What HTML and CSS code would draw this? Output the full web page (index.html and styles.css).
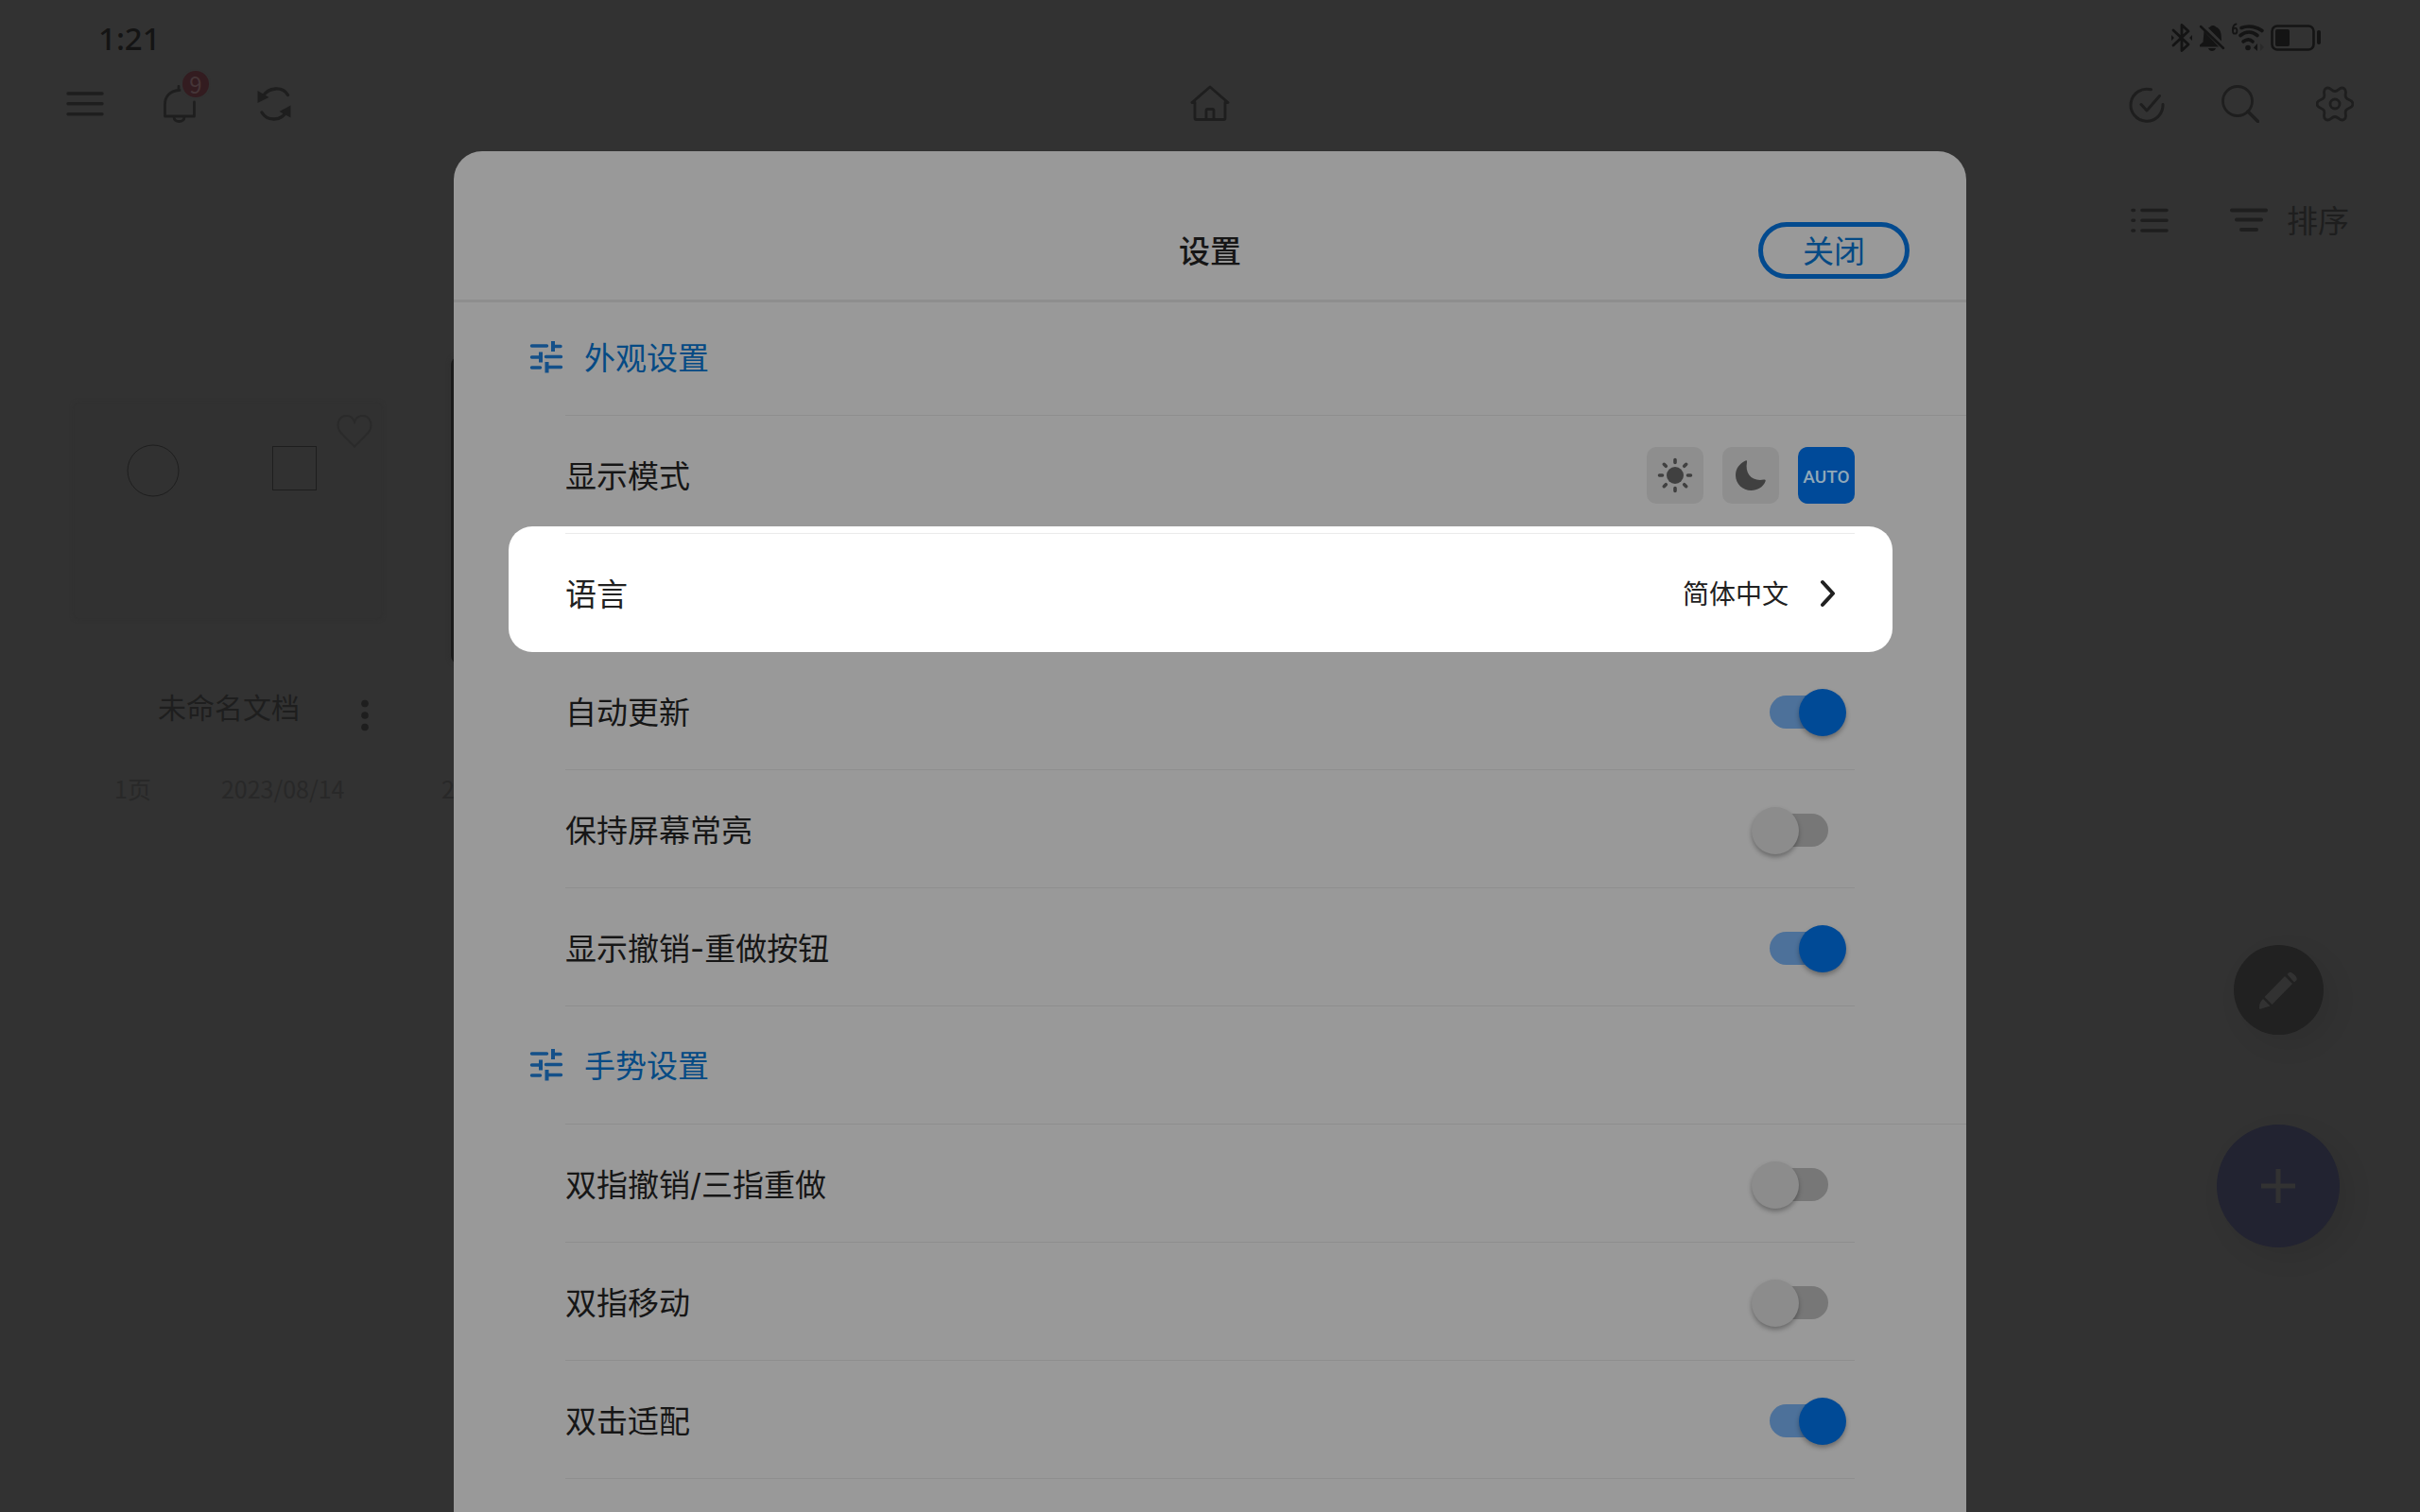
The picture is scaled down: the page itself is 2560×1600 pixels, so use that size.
FILE: index.html
```html
<!DOCTYPE html>
<html lang="zh-CN">
<head>
<meta charset="utf-8">
<title>设置</title>
<meta name="viewport" content="width=device-width, initial-scale=1">
<link rel="stylesheet" href="styles.css">
</head>
<body>
<div class="library">
  <div class="status">
    <span class="clock">1:21</span>
    <div class="status-icons">
      <svg width="24" height="32" viewBox="0 0 24 32" fill="none" stroke="currentColor" stroke-width="2.8" stroke-linejoin="round" stroke-linecap="round"><path d="M3 8l16 15-7 6.500V2.500L19 9 3 24"/><path d="M1 13v6l3-3zM23 13v6l-3-3z" fill="currentColor" stroke="none"/></svg>
      <svg width="28" height="32" viewBox="0 0 28 32" fill="currentColor"><path d="M10 5.500l2-1c1-2 5-2 6 0 5 2 6 6 6 15zM5.500 9L21 25.500H1v-2l3.500-3zM10 27h8c-1 4-7 4-8 0z"/><path d="M2 4l24 23" stroke="currentColor" stroke-width="2.500" stroke-linecap="round"/></svg>
      <svg width="36" height="32" viewBox="0 0 36 32" fill="none" stroke="currentColor" stroke-width="3.600" stroke-linecap="round"><path d="M11 5.500c8-3 17-1 22 3M10 13.500c6-5 13-4 18 0M13 20c4-3 7-3 10 0"/><circle cx="18" cy="26.500" r="2.800" fill="currentColor" stroke="none"/><path d="M28 22v8l-4-3.500z" fill="currentColor" stroke="none"/><path d="M31 22v8l4-4z" fill="#292929" stroke="none"/><path d="M5.500 1.500C3 2 2 4 2 7.500" stroke-width="1.800"/><ellipse cx="4.200" cy="8.700" rx="2.200" ry="3" stroke-width="1.800"/></svg>
      <svg width="54" height="32" viewBox="0 0 54 32" fill="none" stroke="currentColor"><rect x="1.500" y="3.500" width="44" height="25" rx="5.500" stroke-width="2.600"/><rect x="5" y="7" width="15" height="18" rx="2" fill="currentColor" stroke="none"/><path d="M51 10v11" stroke-width="4" stroke-linecap="round"/></svg>
    </div>
  </div>

  <header class="toolbar">
    <div class="tools">
      <button class="tool" aria-label="菜单"><svg width="40" height="40" viewBox="0 0 40 40" fill="none" stroke="currentColor" stroke-width="3.400" stroke-linecap="round"><path d="M2 9h36M2 19.800h36M2 30.700h36"/></svg></button>
      <button class="tool" aria-label="通知"><svg width="40" height="40" viewBox="0 0 40 40" fill="none" stroke="currentColor" stroke-width="2.800" stroke-linecap="round" stroke-linejoin="round"><path d="M19 1.500v4C10 6 4.500 12 4.500 20v13h31V18M19 5.500h1M14 34c0 6 11 6 11 0"/></svg><span class="badge">9</span></button>
      <button class="tool" aria-label="同步"><svg width="40" height="40" viewBox="0 0 40 40" fill="none" stroke="currentColor" stroke-width="3.400" stroke-linecap="round"><path d="M8 12C14 2 29 1 34.500 10.500M7 29c6 10 21 9 26-1"/><path d="M2.500 6v13l12-6zM37.500 34.500v-13l-12 6.500z" fill="currentColor" stroke="none"/></svg></button>
    </div>
    <button class="tool" aria-label="主页"><svg width="42" height="40" viewBox="0 0 42 40" fill="none" stroke="currentColor" stroke-width="2.800" stroke-linecap="round" stroke-linejoin="round"><path d="M2 18.500L21 2l19 16.500h-3V35q0 1.500-1.500 1.500H6.500Q5 36.500 5 35V18.500H2M17 36V27q0-1.500 1.500-1.500h5Q25 25.500 25 27v9"/></svg></button>
    <div class="tools tools-end">
      <button class="tool" aria-label="选择"><svg width="40" height="40" viewBox="0 0 40 40" fill="none" stroke="currentColor" stroke-width="3" stroke-linecap="round" stroke-linejoin="round"><path d="M25.500 4.800A17 17 0 1 0 38 20.500M15 20.500l6 6.500L34.500 11.500"/></svg></button>
      <button class="tool" aria-label="搜索"><svg width="40" height="40" viewBox="0 0 40 40" fill="none" stroke="currentColor" stroke-width="2.800" stroke-linecap="round"><circle cx="17" cy="17" r="15.500"/><path d="M28 28l10.500 10.500" stroke-width="3.400"/></svg></button>
      <button class="tool" aria-label="设置"><svg width="40" height="40" viewBox="0 0 40 40" fill="none" stroke="currentColor" stroke-width="2.800"><path d="M39 20C39 25 33.700 23.300 31.700 26.750C29.700 30.200 33.800 34 29.500 36.500C25.200 39 24 33.500 20 33.500C16 33.500 14.800 39 10.500 36.500C6.200 34 10.300 30.200 8.300 26.750C6.300 23.300 1 25 1 20C1 15 6.300 16.700 8.300 13.250C10.300 9.800 6.200 6 10.500 3.500C14.800 1 16 6.500 20 6.500C24 6.500 25.200 1 29.500 3.500C33.800 6 29.700 9.800 31.700 13.250C33.700 16.700 39 15 39 20Z"/><circle cx="20" cy="20" r="5"/></svg></button>
    </div>
  </header>

  <div class="view-tools">
    <button class="tool" aria-label="列表视图"><svg width="40" height="40" viewBox="0 0 40 40" fill="none" stroke="currentColor" stroke-width="3.600" stroke-linecap="round"><path d="M2 9.500h1.500M12 9.500h26M2 20.300h1.500M12 20.300h26M2 31h1.500M12 31h26"/></svg></button>
    <button class="tool sort"><svg width="40" height="40" viewBox="0 0 40 40" fill="none" stroke="currentColor" stroke-width="4" stroke-linecap="round"><path d="M2 9.500h36M7 19.500h26M12 30h16"/></svg><span class="text">排序</span></button>
  </div>

  <main class="documents">
    <article class="document">
      <div class="preview">
        <div class="page">
          <svg width="324" height="227" viewBox="0 0 324 227" fill="none" stroke="#1e1e1e"><circle cx="83" cy="71" r="27"/><rect x="209.500" y="45.500" width="46" height="46"/><path d="M296 45.500L282 31.500C276 25 278 13 287.500 13c4 0 7 2 8.500 6.500 1.500-4.500 4.500-6.500 8.500-6.500 9.500 0 11.500 12 5.500 18.500z" stroke="#2a2a2a" stroke-width="2"/></svg>
        </div>
      </div>
      <div class="name-row"><h2 class="name">未命名文档</h2><button class="tool" aria-label="更多"><svg width="20" height="34" viewBox="0 0 20 34" fill="currentColor"><circle cx="10" cy="4.500" r="3.800"/><circle cx="10" cy="17" r="3.800"/><circle cx="10" cy="29.500" r="3.800"/></svg></button></div>
      <div class="meta"><span>1页</span><time datetime="2023-08-14">2023/08/14</time></div>
    </article>
    <article class="document">
      <div class="preview"><div class="page page-cover"></div></div>
      <div class="name-row"></div>
      <div class="meta"><span>2</span></div>
    </article>
  </main>

  <div class="actions">
    <button class="fab fab-pen" aria-label="手写"><svg width="44" height="44" viewBox="0 0 44 44" fill="currentColor"><path d="M29 7l8 8-21.500 22-8-8zM31.500 5l2-2c2-2 10 5 8 8l-2.500 2.500zM6 31l7.500 7.500L2.500 42q-1-.5-.5-3 .5-5 4-8z"/></svg></button>
    <button class="fab fab-add" aria-label="新建"><svg width="36" height="36" viewBox="0 0 36 36" fill="none" stroke="currentColor" stroke-width="5"><path d="M18 0v36M0 18h36"/></svg></button>
  </div>
</div>

<div class="overlay">
  <section class="dialog" role="dialog" aria-labelledby="dialog-title">
    <header class="dialog-head">
      <h1 class="dialog-title text" id="dialog-title">设置</h1>
      <button class="close text">关闭</button>
    </header>

    <h2 class="group group-first"><svg class="tune" width="36" height="36" viewBox="0 0 36 36" fill="none" stroke="currentColor" stroke-width="3.400" stroke-linecap="round"><path d="M2.500 6h16M26 6.500h7M2.500 18h9M17.500 17.500h16M2.500 29h9M19 28.500h14.500"/><path d="M25 1v11M12 12.500v11M18.500 23v11.500" stroke-width="4" stroke-linecap="butt"/></svg><span class="text">外观设置</span></h2>
    <div class="row">
      <span class="text">显示模式</span>
      <div class="modes">
        <button class="mode" aria-label="浅色"><svg width="40" height="40" viewBox="0 0 40 40" fill="none" stroke="currentColor" stroke-width="3.600" stroke-linecap="round"><circle cx="20" cy="20" r="9" fill="currentColor" stroke="none"/><path d="M20 3.500v3M20 33.500v3M3.500 20h3M33.500 20h3M8.300 8.300l2 2M29.700 29.700l2 2M31.700 8.300l-2 2M10.300 29.700l-2 2"/></svg></button>
        <button class="mode" aria-label="深色"><svg width="40" height="40" viewBox="0 0 40 40" fill="currentColor"><path d="M14.500 4.500Q16.500 3.500 16 6c-2.500 13 6 21 18 18.500q2.500-.5 1.500 2C33 32.500 27 36 20.500 36 11.500 36 4 29 4 20 4 13 8 7.500 14.500 4.500z"/></svg></button>
        <button class="mode mode-on" aria-pressed="true">AUTO</button>
      </div>
    </div>
    <div class="row row-spot">
      <span class="text">语言</span>
      <button class="value"><span class="text">简体中文</span><svg width="20" height="32" viewBox="0 0 20 32" fill="none" stroke="currentColor" stroke-width="4" stroke-linecap="round" stroke-linejoin="round"><path d="M5 4l11 12L5 28"/></svg></button>
    </div>
    <div class="row"><label class="text" for="update">自动更新</label><input class="switch" type="checkbox" id="update" checked></div>
    <div class="row"><label class="text" for="awake">保持屏幕常亮</label><input class="switch" type="checkbox" id="awake"></div>
    <div class="row"><label class="text" for="undo">显示撤销-重做按钮</label><input class="switch" type="checkbox" id="undo" checked></div>

    <h2 class="group"><svg class="tune" width="36" height="36" viewBox="0 0 36 36" fill="none" stroke="currentColor" stroke-width="3.400" stroke-linecap="round"><path d="M2.500 6h16M26 6.500h7M2.500 18h9M17.500 17.500h16M2.500 29h9M19 28.500h14.500"/><path d="M25 1v11M12 12.500v11M18.500 23v11.500" stroke-width="4" stroke-linecap="butt"/></svg><span class="text">手势设置</span></h2>
    <div class="row"><label class="text" for="tap">双指撤销/三指重做</label><input class="switch" type="checkbox" id="tap"></div>
    <div class="row"><label class="text" for="pan">双指移动</label><input class="switch" type="checkbox" id="pan"></div>
    <div class="row"><label class="text" for="fit">双击适配</label><input class="switch" type="checkbox" id="fit" checked></div>
  </section>
</div>
</body>
</html>
```
FILE: styles.css
```css
* { box-sizing: border-box; }

body {
  margin: 0;
  min-height: 100vh;
  overflow: hidden;
  background: #323232;
  color: #161616;
  font-family: Inter, "Noto Sans CJK SC", sans-serif;
  font-size: 33px;
}

button {
  margin: 0;
  padding: 0;
  border: 0;
  background: none;
  color: inherit;
  font: inherit;
}

svg { display: block; }
h1, h2 { margin: 0; font-size: inherit; font-weight: 400; }

/* CJK glyphs sit low in their line box; this centres them optically */
.text { padding-bottom: 3px; }

/* Library behind the dialog */
.status {
  display: flex;
  justify-content: space-between;
  align-items: center;
  height: 80px;
  padding: 0 104px;
  color: #141414;
}
.clock {
  font-family: "Noto Sans", sans-serif;
  font-size: 33px;
  font-weight: 500;
}
.status-icons { display: flex; gap: 6px; }

.toolbar {
  display: grid;
  grid-template-columns: 1fr auto 1fr;
  align-items: center;
  height: 60px;
  padding: 0 70px;
  color: #1e1e1e;
}
.tools { display: flex; gap: 60px; }
.tools-end { justify-content: flex-end; }
.tool { position: relative; }
.badge {
  position: absolute;
  top: -17px;
  right: -13px;
  width: 32px;
  height: 32px;
  border: 2px solid #323232;
  border-radius: 50%;
  background: #331c20;
  color: #453638;
  font: 24px/28px "Noto Sans CJK SC", sans-serif;
}

.view-tools {
  display: flex;
  justify-content: flex-end;
  align-items: center;
  gap: 65px;
  height: 60px;
  margin-top: 63px;
  padding-right: 75px;
  color: #1e1e1e;
}
.sort { display: flex; align-items: center; gap: 20px; }

.documents {
  display: grid;
  grid-template-columns: repeat(auto-fill, 346px);
  padding: 115px 68px 0;
  color: #1e1e1e;
}
.preview {
  display: flex;
  justify-content: center;
  align-items: center;
  height: 324px;
}
.page { box-shadow: 0 0 5px #2f2f2f; border-radius: 4px; background: #313131; }
.page-cover {
  width: 220px;
  height: 100%;
  border-radius: 8px;
  background: #1a1a1a;
}
.name-row {
  display: flex;
  align-items: flex-end;
  gap: 59px;
  height: 50px;
  margin-top: 22px;
  padding-left: 99px;
}
.name { font-size: 30px; line-height: 50px; }
.meta {
  display: flex;
  gap: 74px;
  margin-top: 45px;
  padding-left: 53px;
  color: #282828;
  font: 25px/30px "Noto Sans CJK SC", sans-serif;
}

.actions {
  position: fixed;
  right: 85px;
  bottom: 280px;
  display: flex;
  flex-direction: column;
  align-items: center;
  gap: 95px;
}
.fab {
  display: grid;
  place-items: center;
  border-radius: 50%;
  color: #323232;
  box-shadow: 10px 10px 28px rgba(0, 0, 0, .08);
}
.fab-pen { width: 95px; height: 95px; background: #212121; }
.fab-add { width: 130px; height: 130px; background: #222331; }

/* Settings dialog */
.overlay {
  position: fixed;
  inset: 0;
  display: flex;
  justify-content: center;
  padding-top: 160px;
  pointer-events: none;
}
.dialog {
  width: 62.5%;
  border-radius: 30px 30px 0 0;
  background: #999;
  pointer-events: auto;
}
.dialog-head {
  display: grid;
  grid-template-columns: 1fr auto 1fr;
  align-items: center;
  height: 160px;
  padding: 53px 60px 0;
  border-bottom: 3px solid #8e8e8e;
}
.dialog-title { grid-column: 2; font-weight: 500; }
.close {
  justify-self: end;
  width: 160px;
  height: 60px;
  border: 5px solid #034a8e;
  border-radius: 30px;
  color: #054a84;
}
.group {
  display: flex;
  align-items: center;
  gap: 22px;
  height: 125px;
  margin-left: 118px;
  border-bottom: 1px solid #8e8e8e;
  color: #054a84;
}
.group-first { height: 120px; padding-bottom: 3px; }
.tune { margin-left: -38px; color: #145089; }

.row {
  display: flex;
  justify-content: space-between;
  align-items: center;
  height: 125px;
  margin: 0 118px;
  padding-top: 2px;
  border-bottom: 1px solid #8e8e8e;
}
/* Spotlighted row: a white plate that reaches past the row's own edges */
.row-spot {
  position: relative;
  z-index: 1;
  border-color: #ebebeb;
  color: #212121;
}
.row-spot::before {
  content: "";
  position: absolute;
  z-index: -1;
  inset: -8px -40px -1px -60px;
  border-radius: 25px;
  background: linear-gradient(#ebebeb, #ebebeb) 60px 7px / calc(100% - 100px) 1px no-repeat, #fff;
}
.value {
  display: flex;
  align-items: center;
  gap: 31px;
  padding-right: 19px;
  font-size: 28px;
}

.modes { display: flex; gap: 20px; }
.mode {
  display: grid;
  place-items: center;
  width: 60px;
  height: 60px;
  border-radius: 10px;
  background: #8e8e8e;
  color: #404040;
}
.mode-on {
  padding-top: 2px;
  background: #004a99;
  color: #90a8b8;
  font: 500 19px Roboto, sans-serif;
}

.switch {
  appearance: none;
  position: relative;
  width: 62px;
  height: 35px;
  margin: 0 28px 0 0;
  border-radius: 18px;
  background: #777;
}
.switch::before {
  content: "";
  position: absolute;
  top: -7px;
  left: -19px;
  width: 50px;
  height: 50px;
  border-radius: 50%;
  background: #8c8c8c;
  box-shadow: 0 3px 5px rgba(0, 0, 0, .3);
}
.switch:checked { background: #4d719a; }
.switch:checked::before { left: 31px; background: #004a96; }
```
